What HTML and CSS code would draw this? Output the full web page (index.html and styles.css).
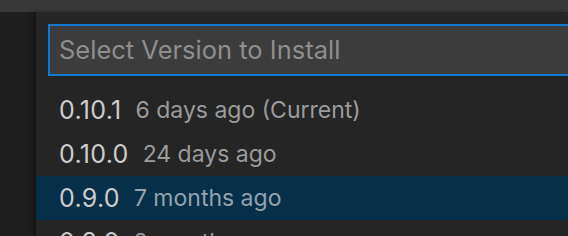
FILE: index.html
```html
<!DOCTYPE html>
<html lang="en">
<head>
    <meta charset="UTF-8">
    <meta name="viewport" content="width=device-width, initial-scale=1.0">
    <title>Select Version to Install</title>
    <link rel="stylesheet" href="styles.css">
</head>
<body>

    <div class="title-bar"></div>

    <div class="workbench">
        <div class="sidebar"></div>

        <div class="quick-pick">
            <div class="quick-input">
                <input type="text" placeholder="Select Version to Install">
            </div>

            <ul class="version-list">
                <li class="version-row">
                    <span class="version">0.10.1</span>
                    <span class="detail">6 days ago (Current)</span>
                </li>
                <li class="version-row">
                    <span class="version">0.10.0</span>
                    <span class="detail">24 days ago</span>
                </li>
                <li class="version-row selected">
                    <span class="version">0.9.0</span>
                    <span class="detail">7 months ago</span>
                </li>
                <li class="version-row">
                    <span class="version">0.8.0</span>
                    <span class="detail">8 months ago</span>
                </li>
            </ul>
        </div>
    </div>

</body>
</html>
```

FILE: styles.css
```css
body {
    font-family: 'Inter', 'Noto Sans', sans-serif;
    background: #1e1e1e;
    margin: 0;
    padding: 0;
    height: 236px;
    overflow: hidden;
}

.title-bar {
    height: 12px;
    background: #383838;
}

.workbench {
    display: flex;
    height: 224px;
}

.sidebar {
    width: 36px;
    background: #1e1e1e;
    flex-shrink: 0;
}

.quick-pick {
    flex: 1;
    background: #252526;
    overflow: hidden;
    box-shadow: -3px 0 4px rgba(0, 0, 0, 0.35);
    position: relative;
}

.quick-input {
    padding: 12px 0 0 12px;
}

.quick-input input {
    box-sizing: border-box;
    width: calc(100% + 20px);
    height: 52px;
    margin: 0;
    padding: 0 0 2px 9px;
    background: #3c3c3c;
    border: 2px solid #0e7ad3;
    outline: none;
    font-family: inherit;
    font-size: 25.5px;
    color: #cccccc;
}

.quick-input input::placeholder {
    color: #8e8e8e;
}

.version-list {
    list-style: none;
    margin: 12px 0 0 0;
    padding: 0;
}

.version-row {
    display: flex;
    align-items: center;
    height: 44px;
    padding-left: 23px;
    white-space: nowrap;
}

.version-row.selected {
    background: #062f4a;
}

.version {
    font-size: 25px;
    letter-spacing: 0.3px;
    color: #cccccc;
}

.detail {
    font-size: 23px;
    color: #9b9b9b;
    margin-left: 14px;
}

.selected .detail {
    color: #94a3ad;
}
```
